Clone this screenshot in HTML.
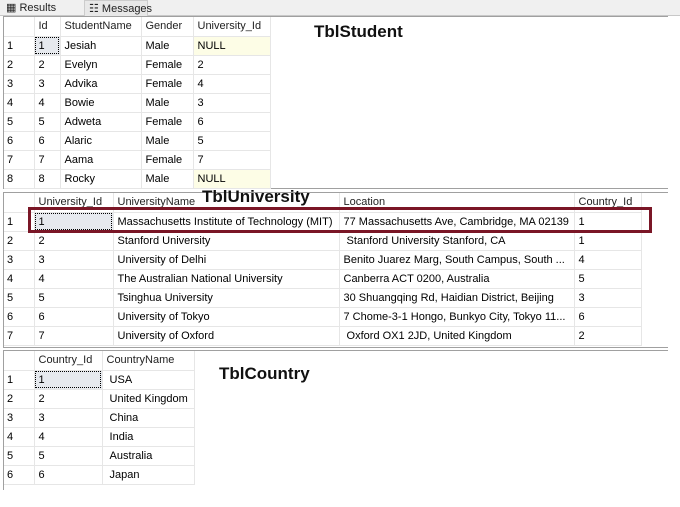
<!DOCTYPE html>
<html><head><meta charset="utf-8"><style>
*{margin:0;padding:0;box-sizing:border-box}
body{width:680px;height:507px;background:#fff;position:relative;overflow:hidden;font-family:"Liberation Sans",sans-serif;font-size:11px;color:#000}
.a{position:absolute;white-space:nowrap}
.top{left:0;top:0;width:680px;height:16px;background:#f0f0f0;border-bottom:1px solid #c8c8c8}
.grid{position:absolute;border:1px solid #a0a0a0;border-right:none;background:#fff}
table{border-collapse:collapse;position:absolute;left:0;top:0}
td{height:19px;border-right:1px solid #e6e6e6;border-bottom:1px solid #e6e6e6;padding:0 0 0 4px;white-space:nowrap;overflow:hidden;vertical-align:middle}
tr.h td{background:#fff;color:#222}
td.n{padding-left:3px}
.y{background:#fdfde6}
.sel{outline:1px dotted #000;outline-offset:-2px;background:#e6e9ee}
.lbl{position:absolute;font-family:"Liberation Sans",sans-serif;font-weight:bold;font-size:17px;color:#111}
</style></head><body>
<div class="a top"></div>
<div class="a" style="left:6px;top:1px;font-size:11px;color:#222">&#x25A6; Results</div>
<div class="a" style="left:84px;top:0;width:64px;height:16px;background:#e8e8e8;border:1px solid #ccc;border-bottom:none;font-size:11px;padding:1px 0 0 4px;color:#222">&#x2637; Messages</div>

<div class="grid" style="left:3px;top:16px;width:665px;height:173px">
<table>
<colgroup><col style="width:30px"><col style="width:26px"><col style="width:81px"><col style="width:52px"><col style="width:77px"></colgroup>
<tr class="h"><td></td><td>Id</td><td>StudentName</td><td>Gender</td><td>University_Id</td></tr>
<tr><td class="n">1</td><td class="sel">1</td><td>Jesiah</td><td>Male</td><td class="y">NULL</td></tr>
<tr><td class="n">2</td><td>2</td><td>Evelyn</td><td>Female</td><td>2</td></tr>
<tr><td class="n">3</td><td>3</td><td>Advika</td><td>Female</td><td>4</td></tr>
<tr><td class="n">4</td><td>4</td><td>Bowie</td><td>Male</td><td>3</td></tr>
<tr><td class="n">5</td><td>5</td><td>Adweta</td><td>Female</td><td>6</td></tr>
<tr><td class="n">6</td><td>6</td><td>Alaric</td><td>Male</td><td>5</td></tr>
<tr><td class="n">7</td><td>7</td><td>Aama</td><td>Female</td><td>7</td></tr>
<tr><td class="n">8</td><td>8</td><td>Rocky</td><td>Male</td><td class="y">NULL</td></tr>
</table></div>
<div class="lbl" style="left:314px;top:22px">TblStudent</div>

<div class="grid" style="left:3px;top:192px;width:665px;height:156px">
<table>
<colgroup><col style="width:30px"><col style="width:79px"><col style="width:226px"><col style="width:235px"><col style="width:67px"></colgroup>
<tr class="h"><td></td><td>University_Id</td><td>UniversityName</td><td>Location</td><td>Country_Id</td></tr>
<tr><td class="n">1</td><td class="sel">1</td><td>Massachusetts Institute of Technology (MIT)</td><td>77 Massachusetts Ave, Cambridge, MA 02139</td><td>1</td></tr>
<tr><td class="n">2</td><td>2</td><td>Stanford University</td><td>&nbsp;Stanford University Stanford, CA</td><td>1</td></tr>
<tr><td class="n">3</td><td>3</td><td>University of Delhi</td><td>Benito Juarez Marg, South Campus, South ...</td><td>4</td></tr>
<tr><td class="n">4</td><td>4</td><td>The Australian National University</td><td>Canberra ACT 0200, Australia</td><td>5</td></tr>
<tr><td class="n">5</td><td>5</td><td>Tsinghua University</td><td>30 Shuangqing Rd, Haidian District, Beijing</td><td>3</td></tr>
<tr><td class="n">6</td><td>6</td><td>University of Tokyo</td><td>7 Chome-3-1 Hongo, Bunkyo City, Tokyo 11...</td><td>6</td></tr>
<tr><td class="n">7</td><td>7</td><td>University of Oxford</td><td>&nbsp;Oxford OX1 2JD, United Kingdom</td><td>2</td></tr>
</table></div>
<div class="lbl" style="left:202px;top:187px">TblUniversity</div>
<div class="a" style="left:28px;top:207px;width:624px;height:26px;border:3px solid #7a1626"></div>

<div class="grid" style="left:3px;top:350px;width:665px;height:140px;border-bottom:none;border-top:1px solid #a0a0a0">
<table>
<colgroup><col style="width:30px"><col style="width:68px"><col style="width:92px"></colgroup>
<tr class="h"><td></td><td>Country_Id</td><td>CountryName</td></tr>
<tr><td class="n">1</td><td class="sel">1</td><td>&nbsp;USA</td></tr>
<tr><td class="n">2</td><td>2</td><td>&nbsp;United Kingdom</td></tr>
<tr><td class="n">3</td><td>3</td><td>&nbsp;China</td></tr>
<tr><td class="n">4</td><td>4</td><td>&nbsp;India</td></tr>
<tr><td class="n">5</td><td>5</td><td>&nbsp;Australia</td></tr>
<tr><td class="n">6</td><td>6</td><td>&nbsp;Japan</td></tr>
</table></div>
<div class="lbl" style="left:219px;top:364px">TblCountry</div>
</body></html>
